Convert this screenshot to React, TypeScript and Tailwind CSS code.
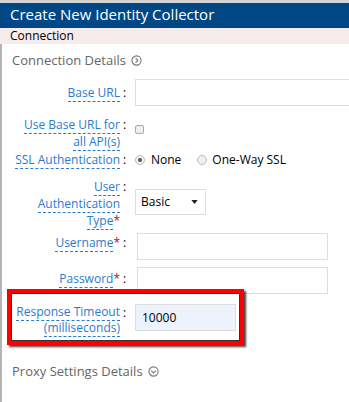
import React from "react";

const font = { fontFamily: '"Open Sans", "DejaVu Sans", sans-serif' };

function Label({ lines, required, leading = "leading-[17px]" }: { lines: string[]; required?: boolean; leading?: string }) {
  return (
    <div className={`w-[118px] shrink-0 text-right text-[12px] text-[#2a7bd0] ${leading}`}>
      {lines.map((l, i) => (
        <div key={i}>
          <span className="border-b border-dashed border-[#2a7bd0]">{l}</span>
          {required && i === lines.length - 1 && <span className="text-[#b0102a]">*</span>}
        </div>
      ))}
    </div>
  );
}

function Colon() {
  return <div className="w-[15px] shrink-0 pl-[3px] text-[12px] leading-[17px] text-black">:</div>;
}

function Radio({ checked }: { checked?: boolean }) {
  return (
    <span className="inline-flex h-[10px] w-[10px] shrink-0 items-center justify-center rounded-full border border-[#bbb] bg-[#f1f1f1]">
      {checked && <span className="h-[4px] w-[4px] rounded-full bg-[#555]" />}
    </span>
  );
}

function CircleArrow({ down }: { down?: boolean }) {
  return (
    <svg width="11" height="11" viewBox="0 0 12 12" className="ml-[5px] inline-block">
      <circle cx="6" cy="6" r="5" fill="none" stroke="#777" strokeWidth="1.2" />
      {down ? (
        <path d="M3.5 5 L6 7.5 L8.5 5" fill="none" stroke="#777" strokeWidth="1.2" />
      ) : (
        <path d="M5 3.5 L7.5 6 L5 8.5" fill="none" stroke="#777" strokeWidth="1.2" />
      )}
    </svg>
  );
}

export default function App() {
  return (
    <div className="h-[402px] w-[349px] overflow-hidden bg-white" style={font}>
      <div className="border-t-[3px] border-[#d4d4d4] bg-[#004785] px-[10px] pb-[3px] pt-[1px] text-[15px] leading-[21px] text-white">
        Create New Identity Collector
      </div>
      <div className="bg-[#f6ecec] px-[10px] py-[1px] text-[12px] leading-[14px] text-black">Connection</div>

      <div className="relative h-[358px] border-l-2 border-[#b5b5b5]">
        <div className="flex items-center pl-[10px] pt-[7px] text-[13px] leading-[18px] text-[#666]">
          Connection Details
          <CircleArrow />
        </div>

        {/* Base URL */}
        <div className="mt-[10px] flex items-center">
          <Label lines={["Base URL"]} />
          <Colon />
          <div className="h-[27px] w-[230px] shrink-0 border border-[#ddd] bg-white" />
        </div>

        {/* Use Base URL */}
        <div className="mt-[10px] flex items-start">
          <Label lines={["Use Base URL for", "all API(s)"]} />
          <Colon />
          <div className="mt-[9px] h-[9px] w-[9px] rounded-[2px] border border-[#aaa] bg-[#eee]" />
        </div>

        {/* SSL */}
        <div className="mt-[1px] flex items-center">
          <Label lines={["SSL Authentication"]} />
          <Colon />
          <div className="flex items-center gap-[6px] text-[12px] leading-[17px] text-black">
            <Radio checked />
            <span className="mr-[10px]">None</span>
            <Radio />
            <span className="-ml-[1px]">One-Way SSL</span>
          </div>
        </div>

        {/* User Authentication Type */}
        <div className="mt-[10px] flex items-start">
          <Label lines={["User", "Authentication", "Type"]} required />
          <Colon />
          <div className="mt-[11px] flex h-[26px] w-[71px] items-center justify-between border border-[#ddd] pl-[5px] pr-[7px] text-[12px] text-black">
            Basic
            <svg width="7" height="4" viewBox="0 0 8 5">
              <path d="M0 0 L8 0 L4 5 Z" fill="#222" />
            </svg>
          </div>
        </div>

        {/* Username */}
        <div className="mt-[4px] flex items-start">
          <div className="flex pt-[1px]">
            <Label lines={["Username"]} required />
            <Colon />
          </div>
          <div className="ml-[2px] h-[27px] w-[191px] border border-[#ddd]" />
        </div>

        {/* Password */}
        <div className="mt-[7px] flex items-start">
          <div className="flex pt-[3px]">
            <Label lines={["Password"]} required />
            <Colon />
          </div>
          <div className="ml-[2px] h-[27px] w-[191px] border border-[#ddd]" />
        </div>

        {/* Response Timeout */}
        <div className="mt-[10px] flex items-start">
          <div className="flex">
            <Label lines={["Response Timeout", "(milliseconds)"]} leading="leading-[16px]" />
            <Colon />
          </div>
          <div className="flex h-[27px] w-[101px] items-center border border-[#ddd] bg-[#eef2fc] pl-[6px] text-[12px] text-black">
            10000
          </div>
        </div>

        <div className="mt-[26px] flex items-center pl-[10px] text-[13px] leading-[18px] text-[#666]">
          Proxy Settings Details
          <CircleArrow down />
        </div>

        {/* red highlight annotation */}
        <div className="pointer-events-none absolute left-[5px] top-[245px] h-[56px] w-[237px] border-[4px] border-[#f00] shadow-[inset_0_0_0_1px_#333,2px_2px_2px_rgba(0,0,0,0.75)]" />
      </div>
    </div>
  );
}
